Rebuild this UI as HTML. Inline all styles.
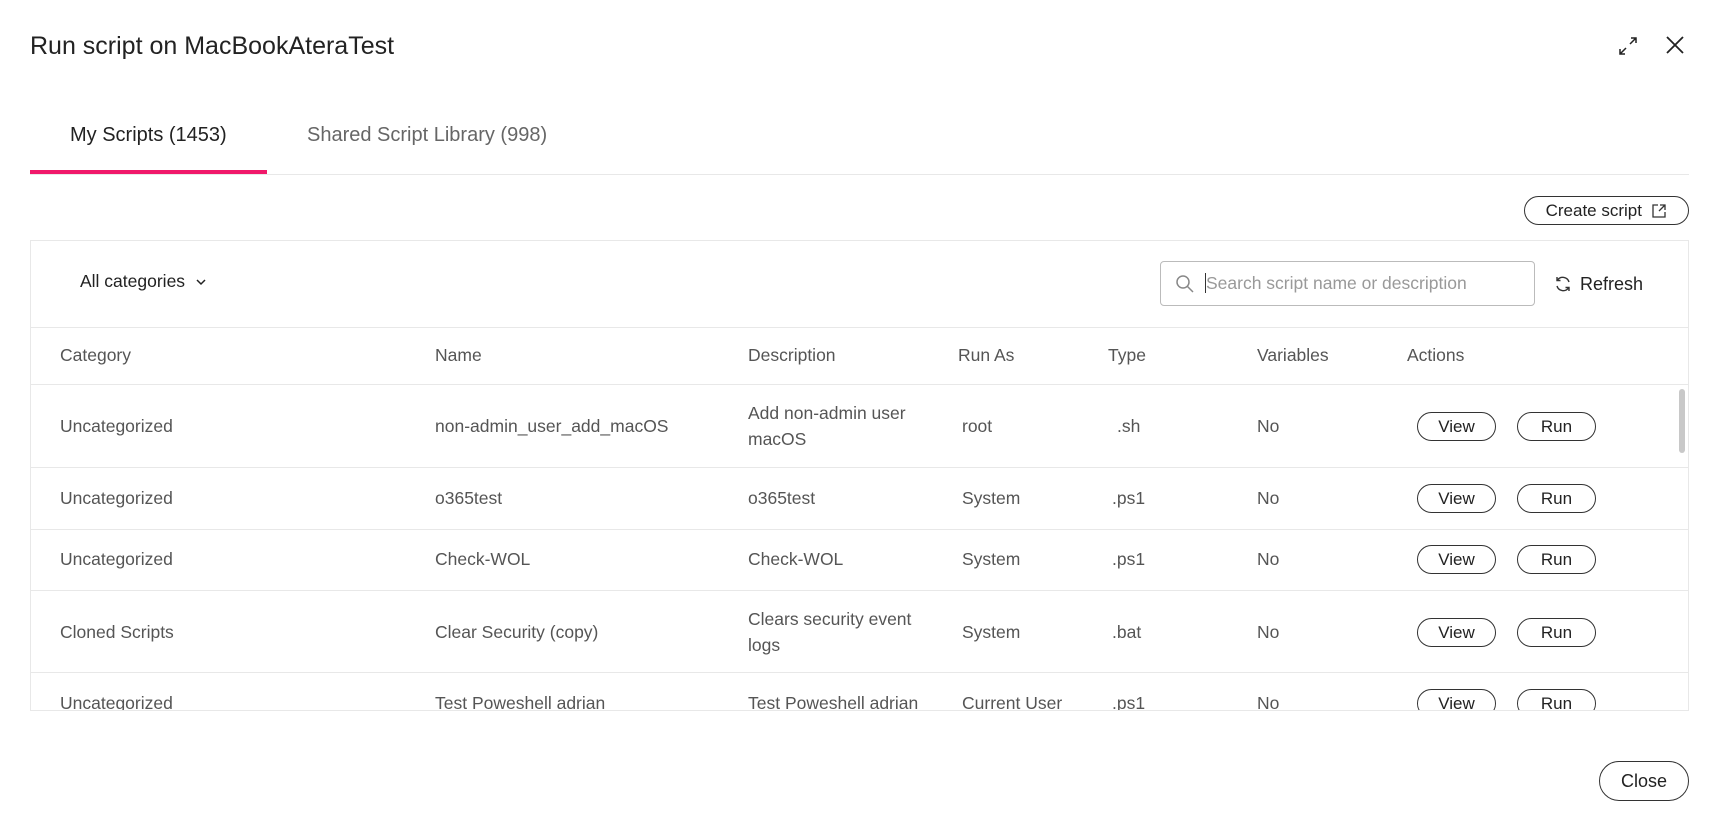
<!DOCTYPE html>
<html><head><style>
*{box-sizing:border-box;margin:0;padding:0}
body{width:1720px;height:832px;background:#fff;font-family:"Liberation Sans",sans-serif;color:#555;position:relative;overflow:hidden}
.a{position:absolute;white-space:nowrap}
.btn{position:absolute;border:1px solid #333;border-radius:16px;color:#222;font-size:17px;display:flex;align-items:center;justify-content:center;background:#fff}
.row{position:absolute;left:31px;width:1657px;border-top:1px solid #e8e8e8}
.c{position:absolute;font-size:17.5px;color:#555;transform:translateY(-50%);line-height:26px;white-space:nowrap}
</style></head><body>
<div class="a" style="left:30px;top:32px;font-size:25px;color:#222">Run script on MacBookAteraTest</div>
<svg class="a" style="left:1618px;top:36px" width="20" height="20" viewBox="0 0 20 20" fill="none" stroke="#222" stroke-width="1.5"><path d="M13 2h5v5M18 2l-6 6M7 18H2v-5M2 18l6-6"/></svg>
<svg class="a" style="left:1665px;top:35px" width="20" height="20" viewBox="0 0 20 20" stroke="#222" stroke-width="1.8"><path d="M2 2l16 16M18 2L2 18"/></svg>
<div class="a" style="left:70px;top:124px;font-size:20px;color:#222">My Scripts (1453)</div>
<div class="a" style="left:307px;top:124px;font-size:20px;color:#666">Shared Script Library (998)</div>
<div class="a" style="left:30px;top:174px;width:1659px;height:1px;background:#e8e8e8"></div>
<div class="a" style="left:30px;top:170px;width:237px;height:4px;background:#f0186a"></div>
<div class="btn" style="left:1524px;top:196px;width:165px;height:29px">Create script&nbsp;&nbsp;<svg width="16" height="16" viewBox="0 0 16 16" fill="none" stroke="#333" stroke-width="1.3"><path d="M7 2H2v12h12V9M9 2h5v5M14 2L8 8"/></svg></div>
<div class="a" style="left:30px;top:240px;width:1659px;height:471px;border:1px solid #e8e8e8;overflow:hidden">
</div>
<div class="a" style="left:80px;top:271px;font-size:17.5px;color:#222">All categories&nbsp;&nbsp;<svg width="12" height="10" viewBox="0 0 12 10" fill="none" stroke="#222" stroke-width="1.5"><path d="M2 3l4 4 4-4"/></svg></div>
<div class="a" style="left:1160px;top:261px;width:375px;height:45px;border:1px solid #bbb;border-radius:4px"></div>
<svg class="a" style="left:1175px;top:274px" width="20" height="20" viewBox="0 0 20 20" fill="none" stroke="#888" stroke-width="1.5"><circle cx="8" cy="8" r="6"/><path d="M12.5 12.5L18 18"/></svg>
<div class="a" style="left:1205px;top:273px;width:1px;height:20px;background:#333"></div>
<div class="a" style="left:1206px;top:273px;font-size:17.5px;color:#999">Search script name or description</div>
<svg class="a" style="left:1554px;top:275px" width="18" height="18" viewBox="0 0 18 18" fill="none" stroke="#333" stroke-width="1.4"><path d="M15 7A6.5 6.5 0 0 0 3.5 5M3 11a6.5 6.5 0 0 0 11.5 2M3 2v3.5h3.5M15 16v-3.5h-3.5"/></svg>
<div class="a" style="left:1580px;top:274px;font-size:18px;color:#222">Refresh</div>
<div class="row" style="top:327px"></div>
<div class="c" style="left:60px;top:355px">Category</div><div class="c" style="left:435px;top:355px">Name</div><div class="c" style="left:748px;top:355px">Description</div><div class="c" style="left:958px;top:355px">Run As</div><div class="c" style="left:1108px;top:355px">Type</div><div class="c" style="left:1257px;top:355px">Variables</div><div class="c" style="left:1407px;top:355px">Actions</div>
<div class="row" style="top:384px"></div>
<div class="row" style="top:467px"></div>
<div class="row" style="top:529px"></div>
<div class="row" style="top:590px"></div>
<div class="row" style="top:672px"></div>
<div style="position:absolute;left:31px;top:385px;width:1657px;height:325px;overflow:hidden">
<div style="position:absolute;left:-31px;top:-385px;width:1720px;height:832px">
<div class="c" style="left:60px;top:426px">Uncategorized</div><div class="c" style="left:435px;top:426px">non-admin_user_add_macOS</div><div class="c" style="left:748px;top:426px">Add non-admin user<br>macOS</div><div class="c" style="left:962px;top:426px">root</div><div class="c" style="left:1117px;top:426px">.sh</div><div class="c" style="left:1257px;top:426px">No</div>
<div class="c" style="left:60px;top:498px">Uncategorized</div><div class="c" style="left:435px;top:498px">o365test</div><div class="c" style="left:748px;top:498px">o365test</div><div class="c" style="left:962px;top:498px">System</div><div class="c" style="left:1112px;top:498px">.ps1</div><div class="c" style="left:1257px;top:498px">No</div>
<div class="c" style="left:60px;top:559px">Uncategorized</div><div class="c" style="left:435px;top:559px">Check-WOL</div><div class="c" style="left:748px;top:559px">Check-WOL</div><div class="c" style="left:962px;top:559px">System</div><div class="c" style="left:1112px;top:559px">.ps1</div><div class="c" style="left:1257px;top:559px">No</div>
<div class="c" style="left:60px;top:632px">Cloned Scripts</div><div class="c" style="left:435px;top:632px">Clear Security (copy)</div><div class="c" style="left:748px;top:632px">Clears security event<br>logs</div><div class="c" style="left:962px;top:632px">System</div><div class="c" style="left:1112px;top:632px">.bat</div><div class="c" style="left:1257px;top:632px">No</div>
<div class="c" style="left:60px;top:703px">Uncategorized</div><div class="c" style="left:435px;top:703px">Test Poweshell adrian</div><div class="c" style="left:748px;top:703px">Test Poweshell adrian</div><div class="c" style="left:962px;top:703px">Current User</div><div class="c" style="left:1112px;top:703px">.ps1</div><div class="c" style="left:1257px;top:703px">No</div>
<div class="btn" style="left:1417px;top:412px;width:79px;height:29px">View</div><div class="btn" style="left:1517px;top:412px;width:79px;height:29px">Run</div>
<div class="btn" style="left:1417px;top:484px;width:79px;height:29px">View</div><div class="btn" style="left:1517px;top:484px;width:79px;height:29px">Run</div>
<div class="btn" style="left:1417px;top:545px;width:79px;height:29px">View</div><div class="btn" style="left:1517px;top:545px;width:79px;height:29px">Run</div>
<div class="btn" style="left:1417px;top:618px;width:79px;height:29px">View</div><div class="btn" style="left:1517px;top:618px;width:79px;height:29px">Run</div>
<div class="btn" style="left:1417px;top:689px;width:79px;height:29px">View</div><div class="btn" style="left:1517px;top:689px;width:79px;height:29px">Run</div>
</div></div>
<div class="a" style="left:1679px;top:389px;width:6px;height:64px;border-radius:3px;background:#c8c8c8"></div>
<div class="btn" style="left:1599px;top:761px;width:90px;height:40px;border-radius:20px;font-size:18px">Close</div>
</body></html>
